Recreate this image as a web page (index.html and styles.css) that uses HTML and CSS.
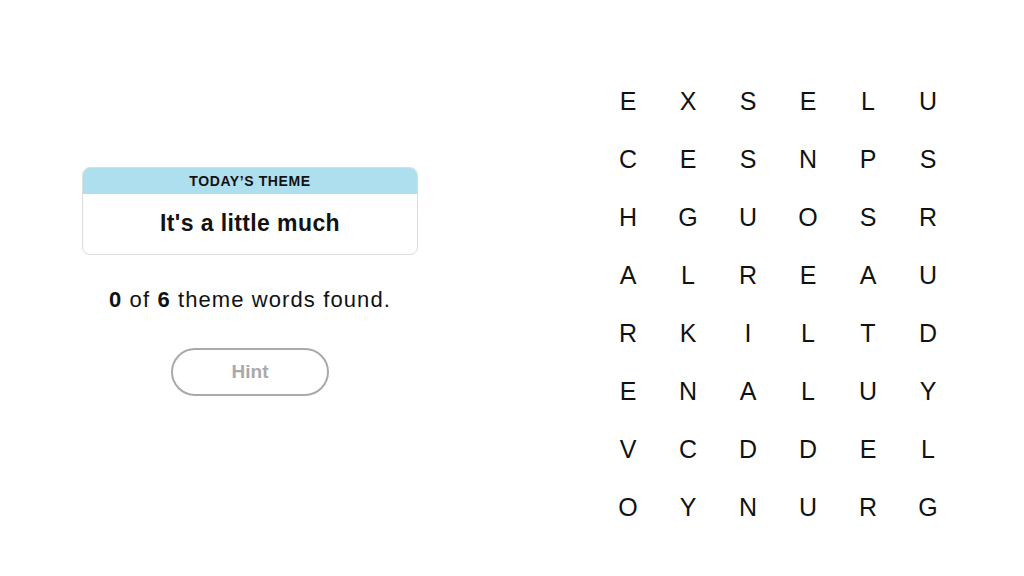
FILE: index.html
```html
<!DOCTYPE html>
<html lang="en">
<head>
    <meta charset="UTF-8">
    <meta name="viewport" content="width=device-width, initial-scale=1.0">
    <title>Strands</title>
    <link rel="stylesheet" href="styles.css">
</head>
<body>
    <main class="game">
        <section class="sidebar">
            <div class="theme-card">
                <div class="theme-label">Today’s Theme</div>
                <div class="theme-clue">It's a little much</div>
            </div>
            <p class="progress"><strong>0</strong> of <strong>6</strong> theme words found.</p>
            <button class="hint-button" disabled>Hint</button>
        </section>

        <section class="board">
            <span>E</span><span>X</span><span>S</span><span>E</span><span>L</span><span>U</span>
            <span>C</span><span>E</span><span>S</span><span>N</span><span>P</span><span>S</span>
            <span>H</span><span>G</span><span>U</span><span>O</span><span>S</span><span>R</span>
            <span>A</span><span>L</span><span>R</span><span>E</span><span>A</span><span>U</span>
            <span>R</span><span>K</span><span>I</span><span>L</span><span>T</span><span>D</span>
            <span>E</span><span>N</span><span>A</span><span>L</span><span>U</span><span>Y</span>
            <span>V</span><span>C</span><span>D</span><span>D</span><span>E</span><span>L</span>
            <span>O</span><span>Y</span><span>N</span><span>U</span><span>R</span><span>G</span>
        </section>
    </main>
</body>
</html>
```

FILE: styles.css
```css
body {
    font-family: "Liberation Sans", Arial, sans-serif;
    margin: 0;
    padding: 0;
    background-color: #ffffff;
    color: #121212;
}
.game {
    display: flex;
    height: 576px;
    padding-left: 82px;
    gap: 180px;
}
.sidebar {
    width: 336px;
    padding-top: 167px;
    display: flex;
    flex-direction: column;
    align-items: center;
}
.theme-card {
    width: 100%;
    box-sizing: border-box;
    border: 1px solid #dcdcdc;
    border-radius: 8px;
    overflow: hidden;
    text-align: center;
}
.theme-label {
    background-color: #aedfee;
    height: 26px;
    line-height: 27px;
    font-size: 14px;
    font-weight: bold;
    letter-spacing: 0.6px;
    text-transform: uppercase;
}
.theme-clue {
    height: 60px;
    line-height: 58px;
    font-size: 23px;
    font-weight: bold;
    letter-spacing: 0.4px;
}
.progress {
    margin: 32px 0 0;
    font-size: 22px;
    line-height: 26px;
    letter-spacing: 1.1px;
}
.hint-button {
    margin-top: 35px;
    width: 158px;
    height: 48px;
    border: 2px solid #a9a9a9;
    border-radius: 24px;
    background-color: #ffffff;
    color: #a9a9a9;
    font-family: inherit;
    font-size: 19px;
    font-weight: bold;
}
.board {
    padding-top: 72px;
    display: grid;
    grid-template-columns: repeat(6, 60px);
    grid-auto-rows: 58px;
    align-content: start;
}
.board span {
    display: flex;
    align-items: center;
    justify-content: center;
    font-size: 25px;
}
```
